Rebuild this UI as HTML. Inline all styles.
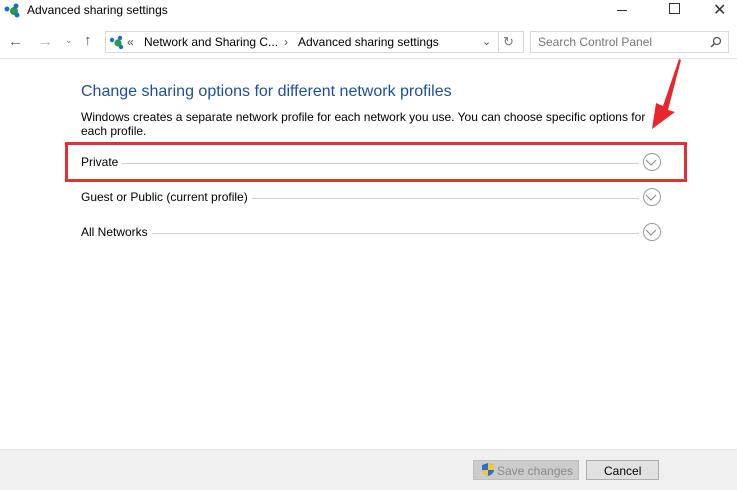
<!DOCTYPE html>
<html><head><style>
body{margin:0;width:737px;height:489px;background:#fff;font-family:"Liberation Sans",sans-serif;position:relative;overflow:hidden;color:#000}
.a{position:absolute}
.t{font-size:12px}
.sec{position:absolute;left:81px;width:580px;height:20px}
.sec span{position:absolute;left:0;top:2px;font-size:12px;background:#fff;padding-right:4px}
.sec .ln{position:absolute;left:0;right:22px;top:10px;border-top:1px solid #cfcfcf}
.sec .c{position:absolute;right:0;top:0;width:18px;height:18px;border:1px solid #999;border-radius:50%;box-sizing:border-box}
</style></head><body>
<svg class="a" style="left:4px;top:2px" width="18" height="16"><circle cx="3" cy="7" r="2.5" fill="#1b6ec2"/><circle cx="10" cy="9" r="4" fill="#2a9a4a"/><circle cx="12" cy="4" r="2.5" fill="#1b6ec2"/><circle cx="13" cy="13" r="2.5" fill="#1b6ec2"/></svg>
<div class="a t" style="left:27px;top:3px">Advanced sharing settings</div>
<div class="a" style="left:617px;top:10px;width:10px;border-top:1px solid #333"></div>
<div class="a" style="left:669px;top:3px;width:9px;height:9px;border:1px solid #333"></div>
<div class="a" style="left:713px;top:0px;font-size:16px;color:#333">✕</div>
<div class="a" style="left:8px;top:33px;font-size:15px;color:#666">←</div>
<div class="a" style="left:38px;top:33px;font-size:15px;color:#bbb">→</div>
<div class="a" style="left:65px;top:35px;font-size:9px;color:#777">⌄</div>
<div class="a" style="left:84px;top:32px;font-size:15px;color:#555">↑</div>
<div class="a" style="left:105px;top:31px;width:419px;height:22px;border:1px solid #d9d9d9;box-sizing:border-box"></div>
<div class="a" style="left:498px;top:31px;height:22px;border-left:1px solid #d9d9d9"></div>
<svg class="a" style="left:109px;top:34px" width="16" height="16"><circle cx="3" cy="6" r="2.2" fill="#1b6ec2"/><circle cx="9" cy="9" r="3.6" fill="#2a9a4a"/><circle cx="11" cy="4" r="2.2" fill="#1b6ec2"/><circle cx="12" cy="13" r="2.2" fill="#1b6ec2"/></svg>
<div class="a t" style="left:127px;top:35px;color:#555">«</div>
<div class="a t" style="left:144px;top:35px">Network and Sharing C...</div>
<div class="a t" style="left:284px;top:35px;color:#555">›</div>
<div class="a t" style="left:298px;top:35px">Advanced sharing settings</div>
<div class="a" style="left:482px;top:35px;font-size:11px;color:#555">⌄</div>
<div class="a" style="left:503px;top:34px;font-size:13px;color:#777">↻</div>
<div class="a" style="left:530px;top:31px;width:199px;height:22px;border:1px solid #d9d9d9;box-sizing:border-box"></div>
<div class="a t" style="left:538px;top:35px;color:#777">Search Control Panel</div>
<svg class="a" style="left:710px;top:36px" width="12" height="12"><circle cx="7" cy="5" r="3.5" fill="none" stroke="#555" stroke-width="1.3"/><line x1="4.5" y1="7.5" x2="1" y2="11" stroke="#555" stroke-width="1.5"/></svg>
<div class="a" style="left:0;top:58px;width:737px;border-top:1px solid #e5e5e5"></div>
<div class="a" style="left:81px;top:83px;font-size:16px;color:#1e4e9c">Change sharing options for different network profiles</div>
<div class="a t" style="left:81px;top:110px;width:570px;line-height:14px">Windows creates a separate network profile for each network you use. You can choose specific options for each profile.</div>
<div class="sec" style="top:153px"><div class="ln"></div><span>Private</span><div class="c"></div></div>
<div class="sec" style="top:188px"><div class="ln"></div><span>Guest or Public (current profile)</span><div class="c"></div></div>
<div class="sec" style="top:223px"><div class="ln"></div><span>All Networks</span><div class="c"></div></div>
<svg class="a" style="left:0;top:0" width="737" height="300">
<g fill="none" stroke="#888" stroke-width="1"><path d="M646 160l5 5 5-5"/><path d="M646 195l5 5 5-5"/><path d="M646 230l5 5 5-5"/></g>
<rect x="66.5" y="143.5" width="619" height="37" fill="none" stroke="#e03236" stroke-width="3"/>
<path d="M681 60 L668 110 L675 112 L652 129 L656 103 L663 106 L679 59 Z" fill="#e8262c"/>
</svg>
<div class="a" style="left:0;top:449px;width:737px;height:40px;background:#f0f0f0;border-top:1px solid #e3e3e3"></div>
<div class="a" style="left:473px;top:460px;width:106px;height:20px;background:#ccc;border:1px solid #bfbfbf;box-sizing:border-box"></div>
<svg class="a" style="left:481px;top:462px" width="14" height="15"><path d="M7 1L13 3V8C13 11 10 13 7 14C4 13 1 11 1 8V3Z" fill="#2c6fcf"/><path d="M7 1L13 3V8H7ZM7 8V14C4 13 1 11 1 8Z" fill="#f3c83a"/></svg>
<div class="a t" style="left:497px;top:464px;color:#8a8a8a">Save changes</div>
<div class="a" style="left:586px;top:460px;width:73px;height:20px;background:#e1e1e1;border:1px solid #adadad;box-sizing:border-box"></div>
<div class="a t" style="left:604px;top:464px">Cancel</div>
</body></html>
